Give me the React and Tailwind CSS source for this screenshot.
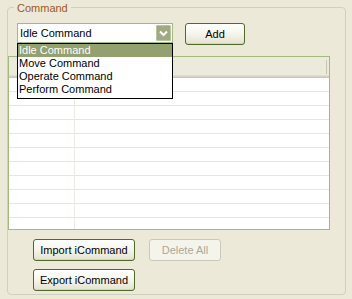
import React from "react";

function XPButton({ children, w, disabled }) {
  return (
    <div
      className={
        "flex items-center justify-center h-[22px] rounded-[3px] border text-[11px] leading-none " +
        (disabled
          ? "border-[#CAC8BB] bg-[#F5F4EA] text-[#ACA899]"
          : "border-[#4E6B2A] bg-gradient-to-b from-[#FFFFFD] via-[#F6F5EC] to-[#E4E1D0] text-black shadow-[inset_0_-1px_0_#D8D3BE]")
      }
      style={{ width: w }}
    >
      {children}
    </div>
  );
}

export default function App() {
  const items = ["Idle Command", "Move Command", "Operate Command", "Perform Command"];
  const lines = Array.from({ length: 10 });
  return (
    <div
      className="relative w-[352px] h-[299px] bg-[#ECE9D8] pt-[7px] pl-[7px]"
      style={{ fontFamily: '"Liberation Sans", Arial, sans-serif' }}
    >
      {/* Group box */}
      <div className="relative w-[339px] h-[288px] border border-[#D0D0BF] rounded-[4px]">
        <div className="absolute left-[6px] -top-[7px] px-[3px] bg-[#ECE9D8] text-[11px] leading-[14px] text-[#A0561C]">
          Command
        </div>

        {/* combo row */}
        <div className="flex items-start pt-[15px] pl-[9px] gap-[12px]">
          <div className="flex items-center w-[156px] h-[20px] border border-[#A4B97F] bg-white">
            <span className="pl-[2px] text-[11px] leading-none text-black flex-1">Idle Command</span>
            <div className="mr-[1px] w-[15px] h-[16px] rounded-[1px] bg-[#9EAB80] border border-[#B9C3A2] flex items-center justify-center">
              <svg width="9" height="7" viewBox="0 0 9 7">
                <path d="M1 1.5 L4.5 5 L8 1.5" fill="none" stroke="white" strokeWidth="2" />
              </svg>
            </div>
          </div>
          <XPButton w={60}>Add</XPButton>
        </div>

        {/* list view */}
        <div className="mt-[11px] w-[322px] h-[174px] border border-[#A4B97F] bg-white flex flex-col">
          <div className="relative h-[18px] bg-[#EBEADB] shrink-0">
            <div className="absolute left-[66px] top-[3px] w-px h-[14px] bg-[#C7C5B2]" />
            <div className="absolute left-[317px] top-[3px] w-px h-[14px] bg-[#C7C5B2]" />
          </div>
          <div className="h-px bg-[#E2DECD]" />
          <div className="h-px bg-[#D6D2C2]" />
          <div className="h-px bg-[#CBC7B8]" />
          <div className="relative flex-1">
            <div className="absolute left-[65px] top-0 bottom-0 w-px bg-[#EDEBDF]" />
            {lines.map((_, i) => (
              <div key={i} className="h-[14px] border-b border-[#E7E6DA]" />
            ))}
          </div>
        </div>

        {/* buttons */}
        <div className="flex flex-col gap-[8px] pl-[25px] pt-[9px]">
          <div className="flex gap-[14px]">
            <XPButton w={102}>Import iCommand</XPButton>
            <XPButton w={72} disabled>
              Delete All
            </XPButton>
          </div>
          <XPButton w={102}>Export iCommand</XPButton>
        </div>

        {/* dropdown list overlay */}
        <div className="absolute left-[9px] top-[35px] w-[156px] h-[56px] border border-black bg-white">
          {items.map((t, i) => (
            <div
              key={t}
              className={
                "h-[13px] pl-[1px] text-[11px] leading-[13px] " +
                (i === 0 ? "bg-[#93A070] text-white" : "text-black")
              }
            >
              {t}
            </div>
          ))}
        </div>
      </div>
    </div>
  );
}
